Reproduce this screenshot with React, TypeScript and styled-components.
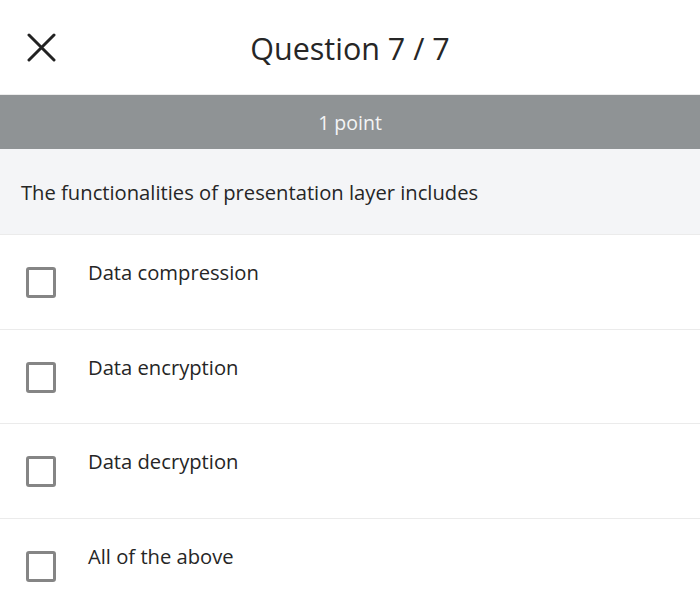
import React from "react";
import styled, { createGlobalStyle } from "styled-components";

const Global = createGlobalStyle`
  html, body { margin: 0; padding: 0; background: #ffffff; }
  body { font-family: "Open Sans", "Noto Sans", sans-serif; color: #262626; }
`;

const Page = styled.div`
  width: 700px;
  height: 611px;
  overflow: hidden;
  display: flex;
  flex-direction: column;
  background: #ffffff;
`;

const Header = styled.header`
  height: 94px;
  flex-shrink: 0;
  border-bottom: 1px solid #ececec;
  display: grid;
  grid-template-columns: 80px 1fr 80px;
  align-items: center;
`;

const CloseButton = styled.button`
  border: none;
  background: none;
  padding: 0;
  margin-left: 27px;
  margin-top: 0px;
  width: 29px;
  height: 29px;
  display: flex;
  align-items: center;
  justify-content: center;
  cursor: pointer;
`;

const Title = styled.h1`
  margin: 0;
  text-align: center;
  font-size: 30.5px;
  font-weight: 400;
  color: #262626;
  line-height: 40px;
  margin-top: 1px;
`;

const PointsBar = styled.div`
  height: 54px;
  flex-shrink: 0;
  background: #8f9395;
  color: #f4f5f6;
  font-size: 19.5px;
  display: flex;
  align-items: center;
  justify-content: center;
`;

const QuestionBlock = styled.div`
  height: 85px;
  flex-shrink: 0;
  background: #f4f5f7;
  display: flex;
  align-items: center;
  padding-left: 21px;
  font-size: 20.2px;
  color: #262626;
`;

const Option = styled.label`
  height: 93.7px;
  flex-shrink: 0;
  border-top: 1px solid #ebebeb;
  display: flex;
  align-items: flex-start;
  padding-left: 26px;
  cursor: pointer;
`;

const Box = styled.span`
  box-sizing: border-box;
  width: 30px;
  height: 31px;
  margin-top: 32px;
  border: 3px solid #858585;
  border-radius: 3px;
  flex-shrink: 0;
`;

const OptionText = styled.span`
  margin-left: 32px;
  margin-top: 23px;
  font-size: 20.2px;
  line-height: 28px;
  color: #262626;
`;

const options = [
  "Data compression",
  "Data encryption",
  "Data decryption",
  "All of the above",
];

export default function App() {
  return (
    <Page>
      <Global />
      <Header>
        <CloseButton aria-label="Close">
          <svg width="29" height="29" viewBox="0 0 29 29">
            <path
              d="M2 2 L27 27 M27 2 L2 27"
              stroke="#222"
              strokeWidth="3"
              strokeLinecap="round"
              fill="none"
            />
          </svg>
        </CloseButton>
        <Title>Question 7 / 7</Title>
        <span />
      </Header>
      <PointsBar>1 point</PointsBar>
      <QuestionBlock>The functionalities of presentation layer includes</QuestionBlock>
      {options.map((o) => (
        <Option key={o}>
          <Box />
          <OptionText>{o}</OptionText>
        </Option>
      ))}
    </Page>
  );
}
